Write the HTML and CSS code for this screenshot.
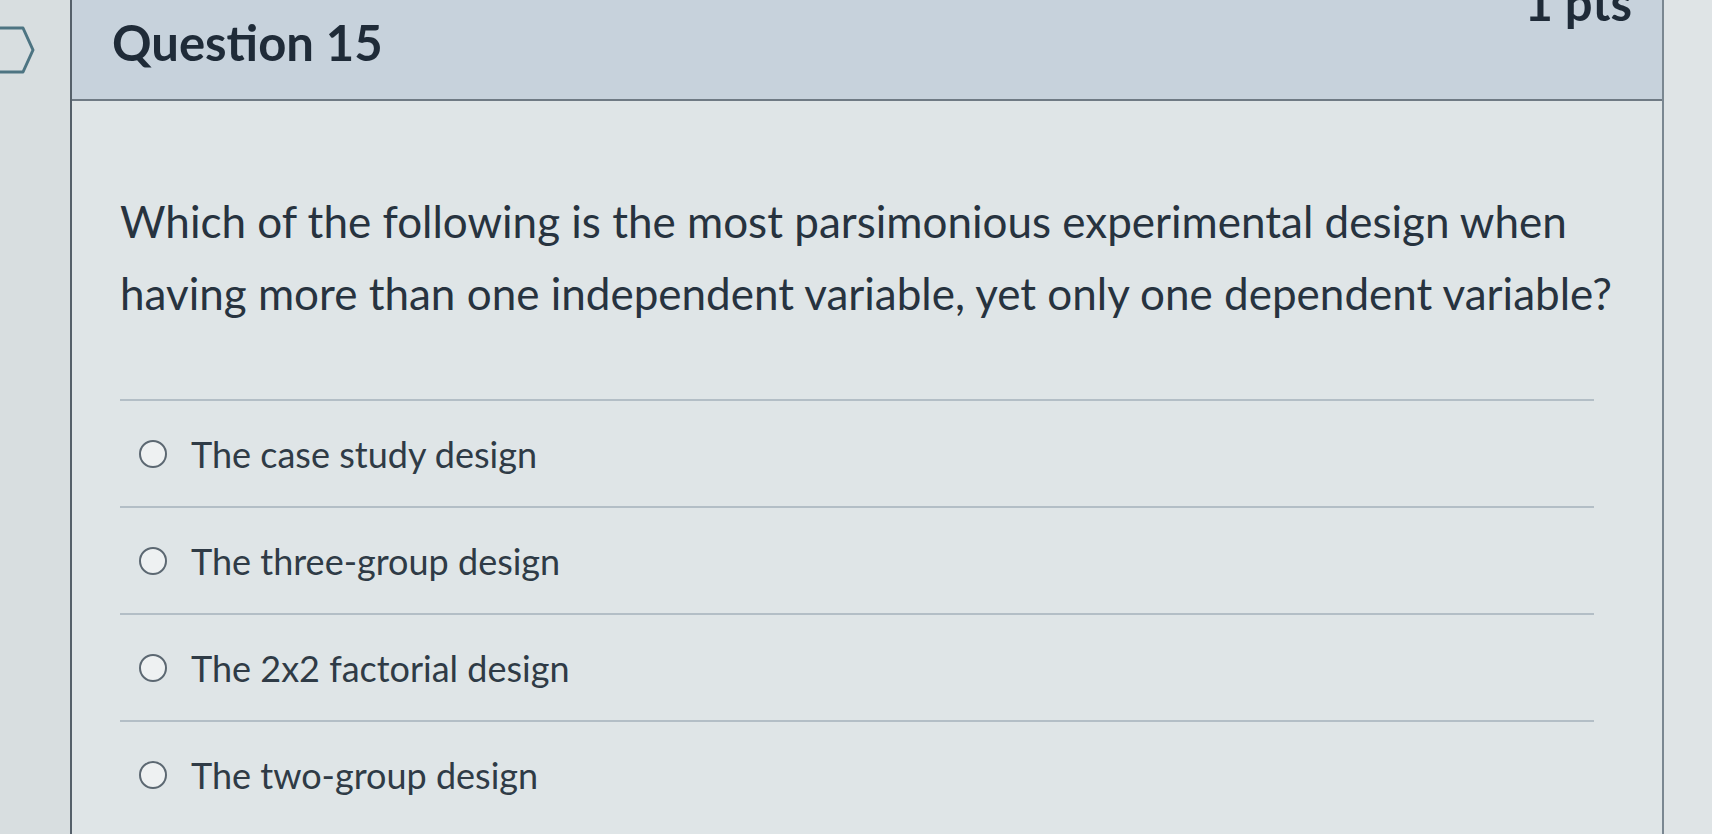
FILE: index.html
```html
<!DOCTYPE html>
<html lang="en">
<head>
    <meta charset="UTF-8">
    <meta name="viewport" content="width=device-width, initial-scale=1.0">
    <title>Question 15</title>
    <link rel="stylesheet" href="styles.css">
</head>
<body>
    <div class="page">
        <div class="gutter">
            <svg class="flag" width="40" height="50" viewBox="0 0 40 50" aria-hidden="true">
                <polyline points="-4,2 23,2 33,24 23,46 -4,46" fill="none" stroke="#4d7482" stroke-width="3" stroke-linejoin="round"/>
            </svg>
        </div>

        <div class="question">
            <div class="question-header">
                <h2 class="question-title">Question 15</h2>
                <span class="question-points">1 pts</span>
            </div>

            <div class="question-body">
                <p class="question-text">Which of the following is the most parsimonious experimental design when having more than one independent variable, yet only one dependent variable?</p>

                <div class="answers">
                    <label class="answer">
                        <input type="radio" name="q15" value="a">
                        <span class="answer-label">The case study design</span>
                    </label>
                    <label class="answer">
                        <input type="radio" name="q15" value="b">
                        <span class="answer-label">The three-group design</span>
                    </label>
                    <label class="answer">
                        <input type="radio" name="q15" value="c">
                        <span class="answer-label">The 2x2 factorial design</span>
                    </label>
                    <label class="answer">
                        <input type="radio" name="q15" value="d">
                        <span class="answer-label">The two-group design</span>
                    </label>
                </div>
            </div>
        </div>
    </div>
</body>
</html>
```

FILE: styles.css
```css
html, body {
    margin: 0;
    height: 100%;
    overflow: hidden;
}
body {
    font-family: Lato, "Open Sans", sans-serif;
    background-color: #dfe4e6;
    color: #2b3744;
}
.page {
    display: flex;
    height: 100%;
}
.gutter {
    width: 70px;
    flex-shrink: 0;
    background-color: #d8dee0;
}
.flag {
    display: block;
    margin-top: 26px;
}
.question {
    flex: 1;
    margin-right: 48px;
    border-left: 2px solid #55606a;
    border-right: 2px solid #7a8791;
    background-color: #dfe5e7;
    display: flex;
    flex-direction: column;
}
.question-header {
    flex-shrink: 0;
    height: 101px;
    box-sizing: border-box;
    padding: 0 30px 0 40px;
    background-color: #c7d2dc;
    border-bottom: 2px solid #6f7a84;
    display: flex;
    justify-content: space-between;
    align-items: flex-start;
}
.question-title {
    margin: 12px 0 0;
    font-size: 49px;
    font-weight: bold;
    line-height: 60px;
    color: #1f2b38;
}
.question-points {
    margin-top: -28px;
    font-size: 49px;
    font-weight: bold;
    line-height: 60px;
    color: #1f2b38;
}
.question-body {
    padding: 0 20px 0 48px;
}
.question-text {
    margin: 84px 0 0;
    font-size: 44px;
    line-height: 72px;
    color: #27333f;
}
.answers {
    margin: 70px 48px 0 0;
}
.answer {
    display: flex;
    align-items: center;
    height: 107px;
    border-top: 2px solid #b3bec6;
    padding-left: 19px;
    box-sizing: border-box;
}
.answer input {
    appearance: none;
    width: 28px;
    height: 28px;
    margin: 0 24px 0 0;
    border: 2px solid #5c6872;
    border-radius: 50%;
    background-color: #eef1f2;
    flex-shrink: 0;
}
.answer-label {
    font-size: 36px;
    color: #2f3b46;
}
```
